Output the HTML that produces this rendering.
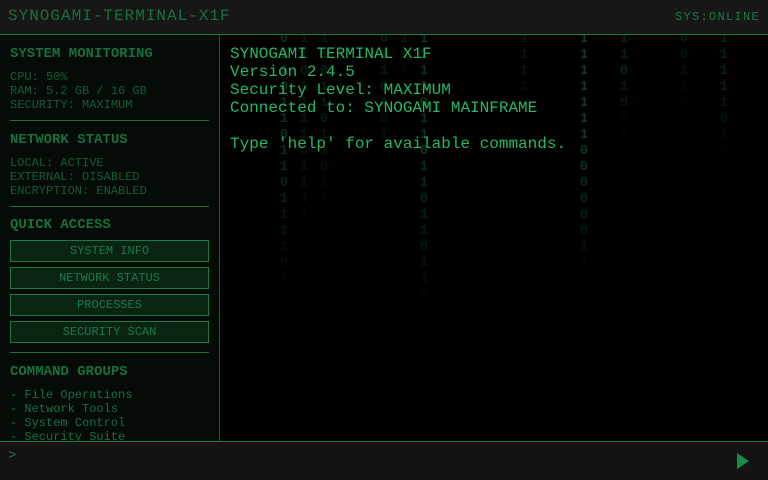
<!DOCTYPE html><html><head><style>
*{margin:0;padding:0;box-sizing:border-box}
body{width:768px;height:480px;background:#000;font-family:"Liberation Mono",monospace;overflow:hidden;position:relative}
#hdr{position:absolute;left:0;top:0;width:768px;height:35px;background:#171717;border-bottom:1px solid #1a7a45}
#hdr .t{position:absolute;left:8px;top:7px;font-size:16px;letter-spacing:1px;color:#1b6e3f}
#hdr .s{position:absolute;right:8px;top:10px;font-size:12px;letter-spacing:1.3px;color:#1a7a45}
#side{position:absolute;left:0;top:35px;width:220px;height:406px;background:#050c08;border-right:1px solid #145a33;padding:0 10px;overflow:hidden}
h3{font-size:14px;font-weight:bold;color:#1a6e3e;margin-top:11px;line-height:16px}
.sm{font-size:12px;line-height:14px;color:#155c34;margin-top:8px}
hr{border:0;border-top:1px solid #1a6e3e;margin-top:8px}
.btn{height:22px;border:1px solid #1b7a45;background:#0a2414;color:#1a7a45;font-size:12px;text-align:center;line-height:20px;margin-top:5px}
#main{position:absolute;left:220px;top:35px;width:548px;height:406px;overflow:hidden}
.col{position:absolute;top:-4px;font-size:14px;font-weight:bold;line-height:16px;color:#0f5a2e;width:12px;text-align:center;-webkit-mask-image:linear-gradient(#000 40%,transparent);mask-image:linear-gradient(#000 40%,transparent)}
#txt{position:absolute;left:10px;top:10px;font-size:16px;line-height:18px;color:#22b865;white-space:pre}
#ftr{position:absolute;left:0;top:441px;width:768px;height:39px;background:#131313;border-top:1px solid #1a7a45}
#ftr .p{position:absolute;left:8px;top:6px;font-size:14px;color:#1a7a45}
</style></head><body>
<div id="hdr"><div class="t">SYNOGAMI-TERMINAL-X1F</div><div class="s">SYS:ONLINE</div></div>
<div id="side">
<h3>SYSTEM MONITORING</h3>
<div class="sm">CPU: 50%<br>RAM: 5.2 GB / 16 GB<br>SECURITY: MAXIMUM</div>
<hr>
<h3>NETWORK STATUS</h3>
<div class="sm">LOCAL: ACTIVE<br>EXTERNAL: DISABLED<br>ENCRYPTION: ENABLED</div>
<hr>
<h3 style="margin-top:10px">QUICK ACCESS</h3>
<div style="height:2px"></div>
<div class="btn">SYSTEM INFO</div>
<div class="btn">NETWORK STATUS</div>
<div class="btn">PROCESSES</div>
<div class="btn">SECURITY SCAN</div>
<hr style="margin-top:9px">
<h3>COMMAND GROUPS</h3>
<div class="sm" style="color:#1a6e3e">- File Operations<br>- Network Tools<br>- System Control<br>- Security Suite</div>
</div>
<div id="main">
<div class="col" style="left:58px;opacity:.55">0<br>1<br>1<br>0<br>1<br>1<br>0<br>1<br>1<br>0<br>1<br>1<br>1<br>1<br>0<br>1<br>0</div>
<div class="col" style="left:78px;opacity:.3">1<br>1<br>0<br>1<br>1<br>1<br>1<br>0<br>1<br>1<br>1<br>1<br>1<br>1</div>
<div class="col" style="left:98px;opacity:.35">1<br>1<br>0<br>1<br>1<br>0<br>1<br>1<br>0<br>1<br>1<br>1</div>
<div class="col" style="left:158px;opacity:.35">0<br>1<br>1<br>0<br>1<br>0<br>1<br>1<br>0</div>
<div class="col" style="left:178px;opacity:.3">1<br>1<br>1</div>
<div class="col" style="left:198px;opacity:.6">1<br>1<br>1<br>1<br>0<br>1<br>1<br>0<br>1<br>1<br>0<br>1<br>1<br>0<br>1<br>1<br>0<br>0</div>
<div class="col" style="left:298px;opacity:.3">1<br>1<br>1<br>1<br>0</div>
<div class="col" style="left:358px;opacity:.7">1<br>1<br>1<br>1<br>1<br>1<br>1<br>0<br>0<br>0<br>0<br>0<br>0<br>1<br>1<br>0</div>
<div class="col" style="left:398px;opacity:.4">1<br>1<br>0<br>1<br>0<br>0<br>0</div>
<div class="col" style="left:458px;opacity:.25">0<br>0<br>1<br>1<br>0</div>
<div class="col" style="left:498px;opacity:.4">1<br>1<br>1<br>1<br>1<br>0<br>1<br>0</div>
<div id="txt">SYNOGAMI TERMINAL X1F
Version 2.4.5
Security Level: MAXIMUM
Connected to: SYNOGAMI MAINFRAME

Type 'help' for available commands.</div>
</div>
<div id="ftr"><div class="p">&gt;</div>
<svg style="position:absolute;left:736px;top:10px" width="14" height="18"><polygon points="1,1 13,9 1,17" fill="#1a8a4a"/></svg></div>
</body></html>
